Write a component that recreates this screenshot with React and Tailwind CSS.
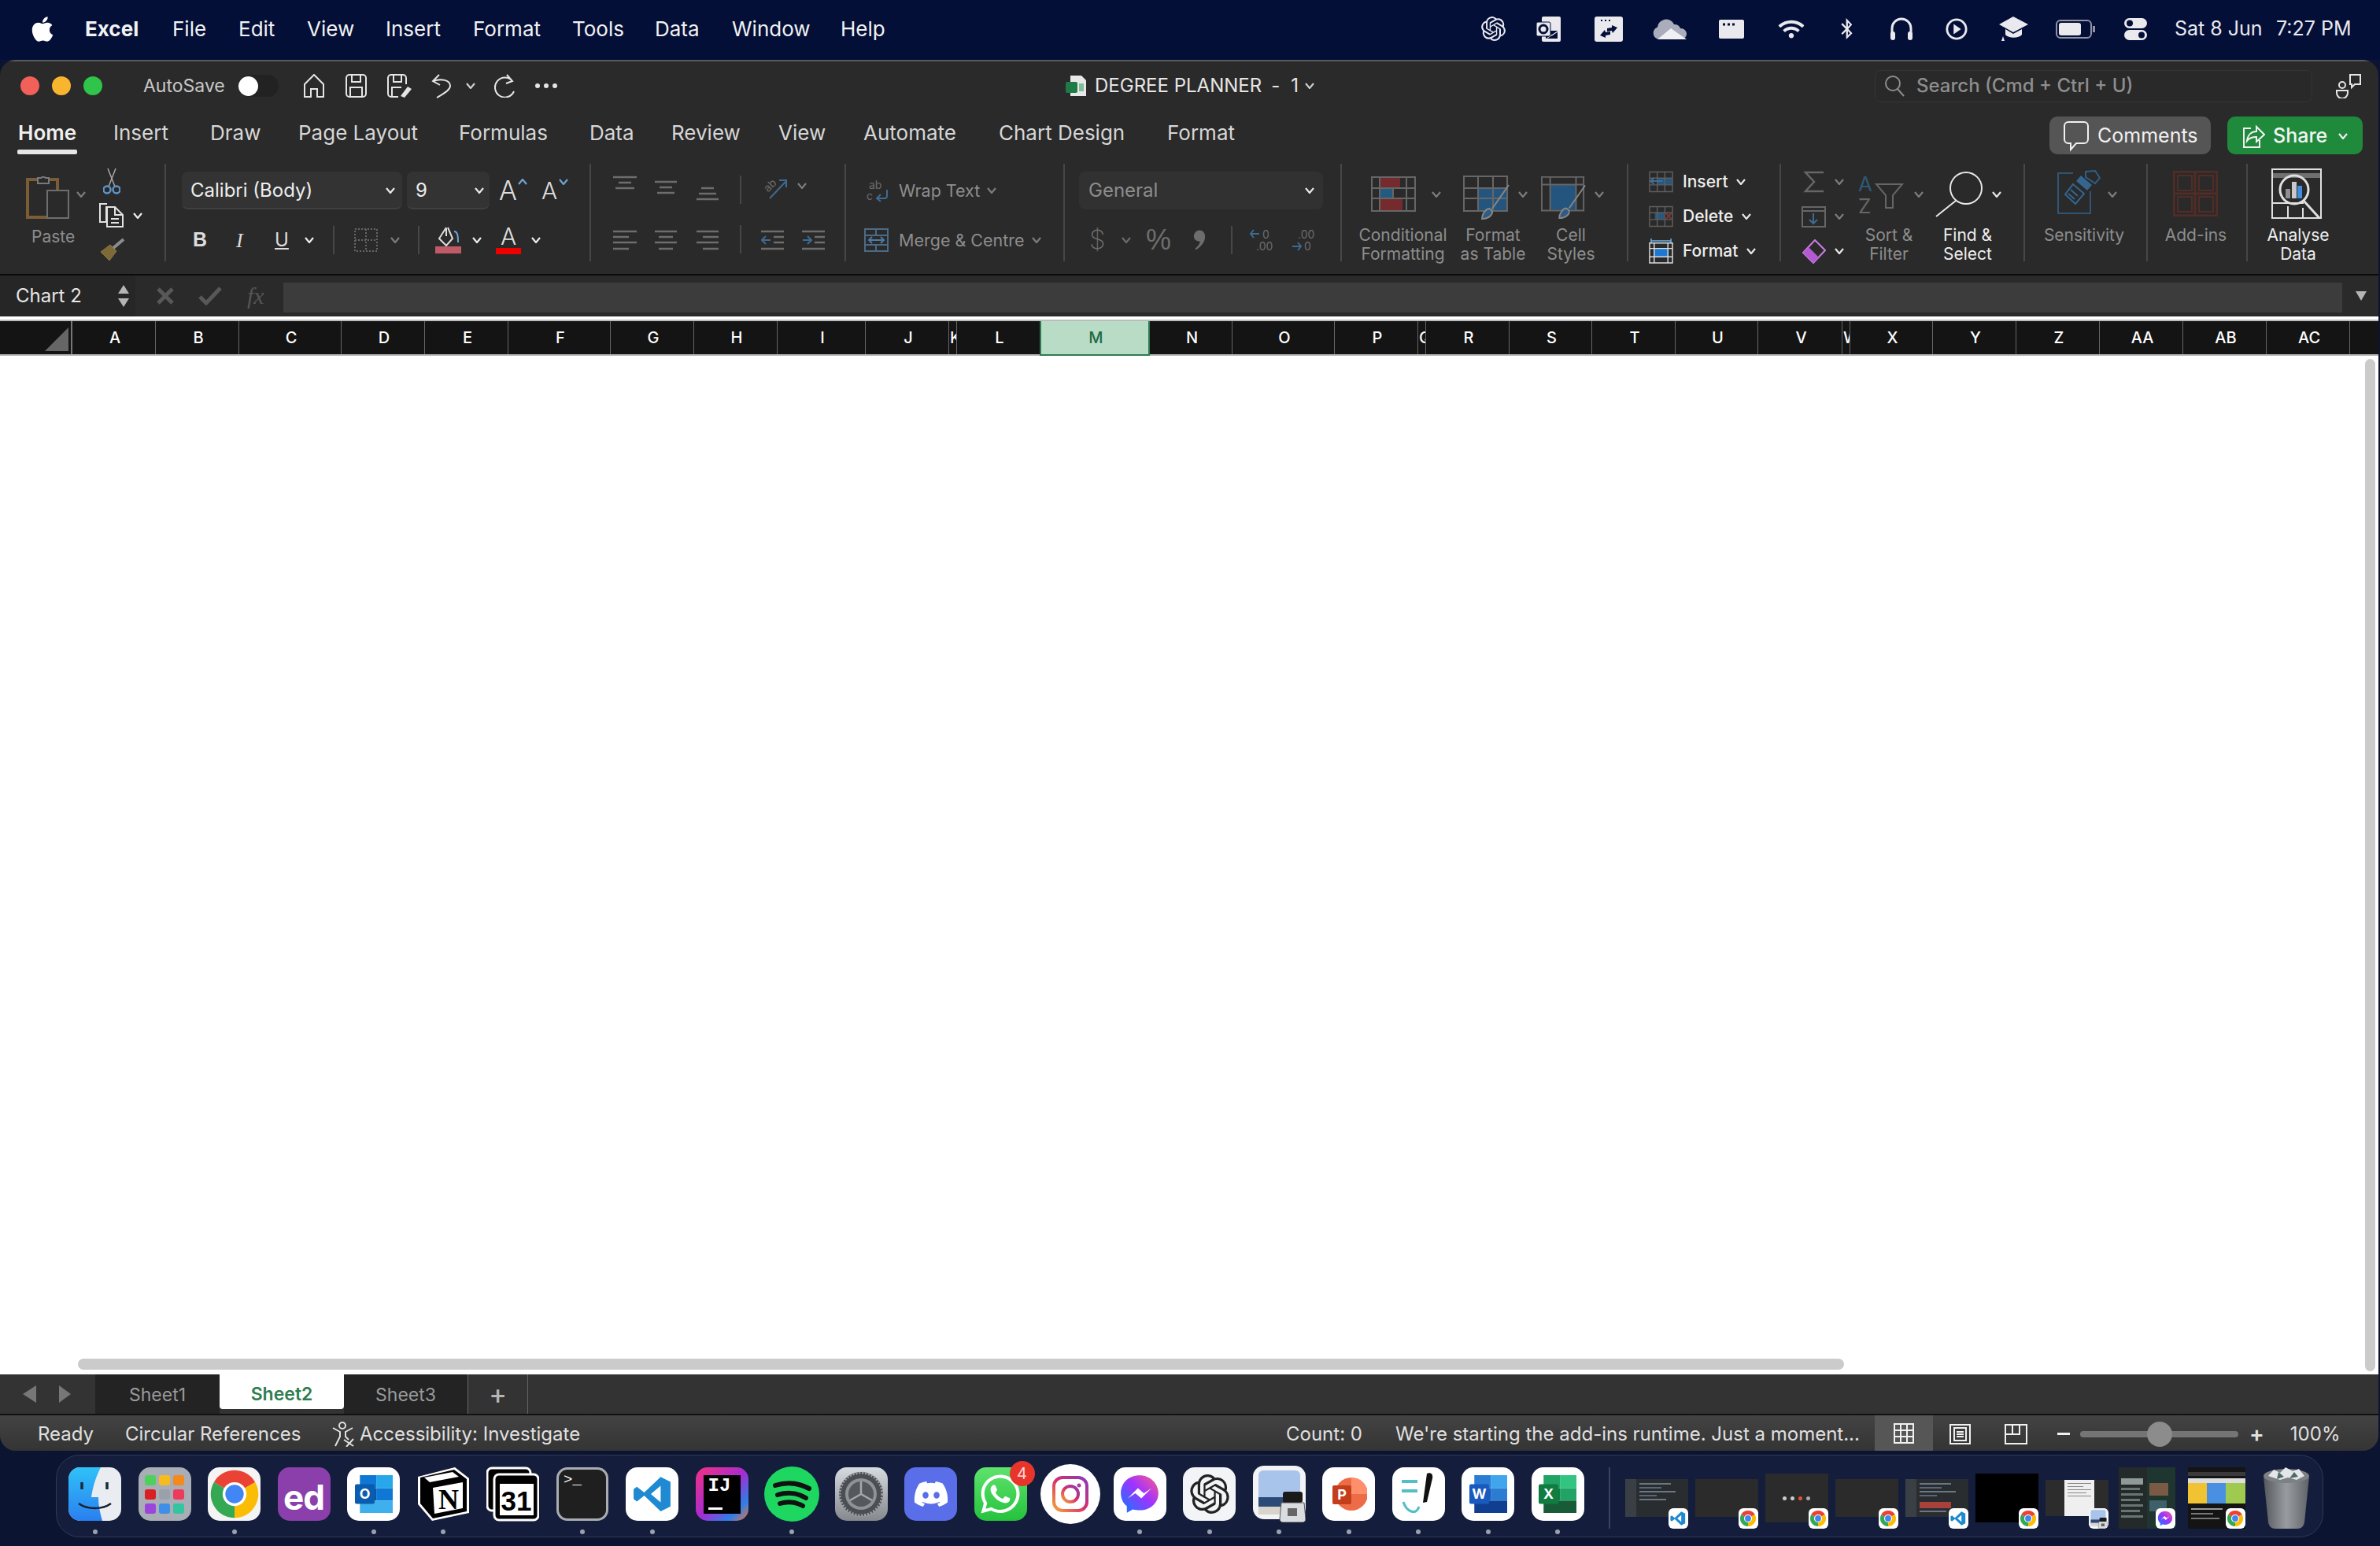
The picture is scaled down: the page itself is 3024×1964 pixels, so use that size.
import React from "react";
import { FaApple, FaDiscord, FaWhatsapp, FaBluetoothB, FaWifi } from "react-icons/fa";
import { SiOpenai } from "react-icons/si";

const Chev = ({ className = "text-[#e8e8e8]" }) => (
  <svg width="12" height="8" viewBox="0 0 12 8" fill="none" stroke="currentColor" strokeWidth="2.2" className={`shrink-0 ${className}`}>
    <path d="M1 1l5 6 5-6" />
  </svg>
);
const DimChev = () => <Chev className="text-[#7d7d7d]" />;
const Sep = () => <div className="mt-[12px] h-[124px] w-[2px] shrink-0 bg-[#474747]" />;
const MiniSep = () => <div className="h-[36px] w-[2px] shrink-0 bg-[#474747]" />;

const Chrome = ({ size = 67 }) => (
  <svg width={size} height={size} viewBox="0 0 48 48">
    <path d="M24 24L4.95 13A22 22 0 0 1 43.05 13Z" fill="#ea4335" />
    <path d="M24 24L43.05 13A22 22 0 0 1 24 46Z" fill="#fbbc04" />
    <path d="M24 24L24 46A22 22 0 0 1 4.95 13Z" fill="#34a853" />
    <circle cx="24" cy="24" r="11" fill="#fff" />
    <circle cx="24" cy="24" r="8.5" fill="#4285f4" />
  </svg>
);
const VsMark = ({ size = 50 }) => (
  <svg width={size} height={size} viewBox="0 0 48 48">
    <path d="M34 3L46 9V39L34 45L14 26L5 33L1 30V18L5 15L14 22ZM34 14L22 24L34 34Z" fill="#1f8ad2" fillRule="evenodd" />
  </svg>
);
const MessengerMark = ({ size = 52 }) => (
  <svg width={size} height={size} viewBox="0 0 48 48">
    <defs>
      <linearGradient id="msg" x1="0" y1="1" x2="1" y2="0">
        <stop offset="0" stopColor="#0a7cff" />
        <stop offset="0.55" stopColor="#a033ff" />
        <stop offset="1" stopColor="#ff5c87" />
      </linearGradient>
    </defs>
    <path d="M24 2C11 2 2 11 2 23c0 7 3 12 7 15v8l7-4c2.500 .7 5 1 8 1 13 0 22-9 22-20S37 2 24 2z" fill="url(#msg)" />
    <path d="M10 29l12-12 7 6 9-6-12 12-7-6z" fill="#fff" />
  </svg>
);
const PreviewMark = ({ width = 67, height = 72 }) => (
  <svg width={width} height={height} viewBox="0 0 67 72">
    <rect x="0" y="0" width="67" height="68" rx="14" fill="#f1f3f5" />
    <rect x="7" y="6" width="53" height="56" rx="6" fill="#a9c4ea" />
    <rect x="7" y="40" width="53" height="12" fill="#2b4a78" />
    <rect x="7" y="52" width="53" height="10" fill="#d8d4cc" />
    <rect x="38" y="33" width="25" height="14" rx="3" fill="#1a1a1a" />
    <path d="M36 47h29l2 21c0 2-2 4-4 4H38c-2 0-4-2-4-4z" fill="#d9dde0" stroke="#555" />
    <rect x="44" y="54" width="12" height="10" fill="#666" />
  </svg>
);

// office style tile, just the block grid plus a letter badge
const Office = ({ a, b, c, d, badge, letter }) => (
  <svg width="48" height="48" viewBox="0 0 46 46">
    <rect x="6" y="0" width="20" height="16" fill={a} />
    <rect x="26" y="0" width="20" height="16" fill={b} />
    <rect x="6" y="16" width="20" height="15" fill={c} />
    <rect x="26" y="16" width="20" height="15" fill={a} />
    <rect x="6" y="31" width="40" height="15" fill={d} />
    <rect x="0" y="11" width="24" height="24" rx="2" fill={badge} />
    <text x="12" y="29" textAnchor="middle" fontSize="17" fontWeight="700" fill="#fff" fontFamily="Inter">{letter}</text>
  </svg>
);

const Tile = ({ className = "bg-white", children }) => (
  <div className={`flex h-[68px] w-[67px] items-center justify-center rounded-[15px] ${className}`}>{children}</div>
);

const DockIcon = ({ dot, children }) => (
  <div className="flex w-[67px] shrink-0 flex-col items-center">
    <div className="relative flex h-[68px] w-[67px] items-center justify-center">{children}</div>
    <div className={`mt-[11px] h-[6px] w-[6px] rounded-full ${dot ? "bg-[#9aa0ad]" : "bg-transparent"}`} />
  </div>
);

const Thumb = ({ boxClass, badge, children, wide = "w-[80px]" }) => (
  <div className={`relative flex h-[78px] shrink-0 items-center ${wide}`}>
    <div className={`w-full overflow-hidden ${boxClass}`}>{children}</div>
    <div className="absolute bottom-0 right-0 flex h-[26px] w-[25px] items-center justify-center overflow-hidden rounded-[6px] bg-white">{badge}</div>
  </div>
);
const CodeLines = ({ red }) => (
  <div className="flex h-full w-full bg-[#2a2d30]">
    <div className="mr-[4px] h-full w-[14px] bg-[#3a3f45]" />
    <div className="flex flex-col gap-[3px] pt-[5px]">
      <div className="h-[2px] w-[40px] bg-[#6b7784]" />
      <div className="h-[2px] w-[28px] bg-[#596673]" />
      <div className="h-[2px] w-[46px] bg-[#6b7784]" />
      <div className="h-[2px] w-[22px] bg-[#596673]" />
      {red && <div className="mt-[4px] h-[8px] w-[40px] bg-[#a8403c]" />}
      <div className="h-[2px] w-[34px] bg-[#6b7784]" />
    </div>
  </div>
);

const gridLines = "M1 1h30v26H1zM1 9h30M1 18h30M11 1v26M21 1v26";
const brushPath = "M58 12L37 42M24 55c0-6 4-12 9-13 5 2 5 6 2 9-3 3-7 4-11 4z";

export default function App() {
  return (
    <div className="flex h-[1964px] w-[3024px] flex-col overflow-hidden bg-[#0b1431] font-['Inter',sans-serif]">
      {/* mac menu bar */}
      <div className="flex h-[76px] shrink-0 items-center bg-[#040f38] pb-[3px] text-[26px] text-[#f2f2f2]">
        <FaApple className="ml-[36px] mr-[36px] h-[36px] w-[36px] shrink-0 text-white" />
        <span className="w-[111px] font-bold">Excel</span>
        <span className="w-[84px]">File</span>
        <span className="w-[87px]">Edit</span>
        <span className="w-[100px]">View</span>
        <span className="w-[111px]">Insert</span>
        <span className="w-[126px]">Format</span>
        <span className="w-[105px]">Tools</span>
        <span className="w-[98px]">Data</span>
        <span className="w-[138px]">Window</span>
        <span>Help</span>
        <div className="ml-auto flex w-[1142px] items-center text-[#e9e9ee]">
          <SiOpenai className="h-[31px] w-[31px] shrink-0" />
          <svg width="31" height="32" viewBox="0 0 31 32" className="ml-[39px] shrink-0">
            <rect x="7" y="0" width="24" height="32" rx="2" fill="#e9e9ee" />
            <rect x="12" y="18" width="15" height="10" fill="#040f38" />
            <path d="M13 19l7 5 7-5M13 28l14-9" stroke="#e9e9ee" fill="none" />
            <rect x="0" y="7" width="18" height="18" rx="2" fill="#e9e9ee" stroke="#040f38" />
            <circle cx="9" cy="16" r="5" fill="none" stroke="#040f38" strokeWidth="3" />
          </svg>
          <svg width="36" height="32" viewBox="0 0 36 32" className="ml-[43px] shrink-0">
            <rect width="36" height="32" rx="3" fill="#e9e9ee" />
            <path d="M8 5h2M13 5h2M18 5h2" stroke="#040f38" strokeWidth="2" />
            <path d="M7 24l6-7 1 3 6-1v4l-6 1v3zM29 14l-6 7-1-3-6 1v-4l6-1V11z" fill="#040f38" />
          </svg>
          <svg width="43" height="26" viewBox="0 0 43 26" className="ml-[38px] shrink-0">
            <path d="M8 26a8 8 0 0 1-2-15.500A11 11 0 0 1 27 7a8 8 0 0 1 8 5c5 0 8 3.500 8 7s-3 7-7 7z" fill="#a9adbc" />
            <path d="M6 26l17-14 20 14z" fill="#eef0f4" />
          </svg>
          <svg width="32" height="24" viewBox="0 0 32 24" className="ml-[41px] shrink-0">
            <rect width="32" height="24" rx="2" fill="#e9e9ee" />
            <path d="M5 6h3M11 6h3M17 6h3" stroke="#040f38" strokeWidth="3" />
          </svg>
          <FaWifi className="ml-[43px] h-[26px] w-[34px] shrink-0" />
          <FaBluetoothB className="ml-[44px] h-[27px] w-[19px] shrink-0" />
          <svg width="30" height="30" viewBox="0 0 30 30" fill="none" stroke="#e9e9ee" className="ml-[45px] shrink-0">
            <path d="M3 21v-7a12 12 0 0 1 24 0v7" strokeWidth="3" />
            <rect x="1" y="18" width="6" height="11" rx="3" fill="#e9e9ee" strokeWidth="0" />
            <rect x="23" y="18" width="6" height="11" rx="3" fill="#e9e9ee" strokeWidth="0" />
          </svg>
          <svg width="30" height="28" viewBox="0 0 30 30" className="ml-[40px] shrink-0">
            <circle cx="15" cy="15" r="13" fill="none" stroke="#e9e9ee" strokeWidth="3" />
            <path d="M11 8l10 7-10 7z" fill="#e9e9ee" />
          </svg>
          <svg width="37" height="32" viewBox="0 0 37 32" className="ml-[39px] shrink-0">
            <path d="M18 0l19 10-19 10L0 10z" fill="#e9e9ee" />
            <path d="M8 16v7c4 5 17 5 21 0v-7l-11 6zM5 11v14l-2 6h4l-2-6z" fill="#e9e9ee" />
          </svg>
          <div className="ml-[35px] flex h-[24px] w-[46px] shrink-0 items-center rounded-[6px] border-2 border-[#8f93a3] p-[2px]">
            <div className="h-full w-[28px] rounded-[3px] bg-[#e9e9ee]" />
          </div>
          <div className="ml-[1px] h-[8px] w-[3px] shrink-0 bg-[#8f93a3]" />
          <svg width="29" height="28" viewBox="0 0 29 28" className="ml-[37px] shrink-0">
            <rect width="29" height="13" rx="6.500" fill="#e9e9ee" />
            <circle cx="7" cy="6.500" r="4" fill="#040f38" />
            <rect y="15" width="29" height="13" rx="6.500" fill="#e9e9ee" />
            <circle cx="22" cy="21.500" r="4" fill="#040f38" />
          </svg>
          <span className="ml-[35px] w-[129px] whitespace-nowrap text-[25px]">Sat 8 Jun</span>
          <span className="whitespace-nowrap text-[25px]">7:27 PM</span>
        </div>
      </div>

      {/* excel window */}
      <div className="mr-[2px] flex h-[1767px] shrink-0 flex-col overflow-hidden rounded-[20px] bg-[#2a2a2a] text-[#eeeeee]">
        {/* title bar */}
        <div className="flex h-[64px] shrink-0 items-center border-t-2 border-[#5a5a5a]">
          <div className="flex w-[1354px] shrink-0 items-center">
            <div className="ml-[26px] h-[24px] w-[24px] rounded-full bg-[#f2605a]" />
            <div className="ml-[16px] h-[24px] w-[24px] rounded-full bg-[#f9b52e]" />
            <div className="ml-[16px] h-[24px] w-[24px] rounded-full bg-[#2fc44a]" />
            <span className="ml-[52px] w-[121px] text-[23px] text-[#c8c8c8]">AutoSave</span>
            <div className="flex h-[28px] w-[51px] items-center rounded-full bg-[#222222]">
              <div className="h-[25px] w-[25px] rounded-full bg-white" />
            </div>
            <svg width="28" height="30" viewBox="0 0 28 30" fill="none" stroke="#e5e5e5" strokeWidth="2" className="ml-[31px]">
              <path d="M2 13L14 1l12 12v16h-8V19h-8v10H2z" />
            </svg>
            <svg width="27" height="30" viewBox="0 0 27 30" fill="none" stroke="#e5e5e5" strokeWidth="2" className="ml-[26px]">
              <path d="M5 1h17a4 4 0 0 1 4 4v20a4 4 0 0 1-4 4H5a4 4 0 0 1-4-4V5a4 4 0 0 1 4-4zM8 1v9h11V1M6 29V17h15v12" />
            </svg>
            <svg width="31" height="30" viewBox="0 0 31 30" fill="none" stroke="#e5e5e5" strokeWidth="2" className="ml-[26px]">
              <path d="M14 29H5a4 4 0 0 1-4-4V5a4 4 0 0 1 4-4h15a4 4 0 0 1 4 4v8M8 1v9h10V1M6 29V17h12" />
              <path d="M17 28l9-12 5 3-9 11z" fill="#e5e5e5" strokeWidth="0" />
            </svg>
            <svg width="27" height="31" viewBox="0 0 27 31" fill="none" stroke="#e5e5e5" strokeWidth="2" className="ml-[24px]">
              <path d="M11 1L3 9l9 5M3 9c11-4 22-1 22 6 0 6-10 11-17 15" />
            </svg>
            <Chev className="ml-[18px] text-[#d0d0d0]" />
            <svg width="28" height="30" viewBox="0 0 28 30" fill="none" stroke="#e5e5e5" strokeWidth="2" className="ml-[23px]">
              <path d="M24 9A12.500 12.500 0 1 0 26 22M17 1l7 8-8 3" />
            </svg>
            <div className="ml-[25px] flex gap-[5px]">
              <div className="h-[6px] w-[6px] rounded-full bg-[#e5e5e5]" />
              <div className="h-[6px] w-[6px] rounded-full bg-[#e5e5e5]" />
              <div className="h-[6px] w-[6px] rounded-full bg-[#e5e5e5]" />
            </div>
          </div>
          <div className="flex w-[1028px] shrink-0 items-center text-[24px] text-[#e6e6e6]">
            <svg width="27" height="28" viewBox="0 0 27 28">
              <path d="M6 1h14l6 6v20H6z" fill="#e8e8e8" />
              <rect x="0" y="9" width="15" height="14" rx="2" fill="#1e7b48" />
              <rect x="17" y="11" width="6" height="10" fill="#7fbf97" />
            </svg>
            <span className="ml-[10px] whitespace-nowrap">DEGREE PLANNER</span>
            <span className="ml-[12px]">-</span>
            <span className="ml-[14px]">1</span>
            <Chev className="ml-[8px] text-[#cccccc]" />
          </div>
          <div className="flex h-[41px] w-[556px] shrink-0 items-center rounded-[8px] border border-[#353535] bg-[#292929]">
            <svg width="27" height="28" viewBox="0 0 27 28" fill="none" stroke="#8c8c8c" strokeWidth="2" className="ml-[11px]">
              <circle cx="11" cy="11" r="9" />
              <path d="M17 18l8 9" />
            </svg>
            <span className="ml-[14px] whitespace-nowrap text-[24px] font-medium text-[#8e8e8e]">Search (Cmd + Ctrl + U)</span>
          </div>
          <svg width="32" height="31" viewBox="0 0 32 31" fill="none" stroke="#e5e5e5" strokeWidth="2" className="ml-[30px]">
            <circle cx="8" cy="14" r="4" />
            <path d="M1 21h14v3a7 7 0 0 1-14 0zM18 1h13v12h-7l-4 4v-4h-2z" />
          </svg>
        </div>

        {/* ribbon tabs */}
        <div className="flex h-[56px] shrink-0 text-[26px] text-[#d6d6d6]">
          <div className="flex h-full items-center pt-[1px]">
            <div className="relative ml-[23px] flex h-full w-[121px] items-center font-semibold text-[#f0f0f0]">
              Home
              <div className="absolute bottom-0 left-[-1px] h-[6px] w-[76px] rounded-[2px] bg-[#e6e6e6]" />
            </div>
            <span className="w-[123px]">Insert</span>
            <span className="w-[112px]">Draw</span>
            <span className="w-[204px]">Page Layout</span>
            <span className="w-[166px]">Formulas</span>
            <span className="w-[104px]">Data</span>
            <span className="w-[136px]">Review</span>
            <span className="w-[108px]">View</span>
            <span className="w-[172px]">Automate</span>
            <span className="w-[214px]">Chart Design</span>
            <span>Format</span>
          </div>
          <div className="ml-auto flex h-[48px] w-[205px] items-center self-end rounded-[10px] bg-[#555555] pt-[2px]">
            <svg width="34" height="40" viewBox="0 0 34 40" fill="none" stroke="#f0f0f0" strokeWidth="2" className="ml-[17px]">
              <path d="M7 2h20a5 5 0 0 1 5 5v17a5 5 0 0 1-5 5H17l-7 8v-8H7a5 5 0 0 1-5-5V7a5 5 0 0 1 5-5z" />
            </svg>
            <span className="ml-[10px] whitespace-nowrap text-[25px] text-[#f0f0f0]">Comments</span>
          </div>
          <div className="ml-[21px] mr-[20px] flex h-[48px] w-[172px] items-center self-end rounded-[10px] bg-[#1f8a3b] pt-[2px]">
            <svg width="30" height="30" viewBox="0 0 30 30" fill="none" stroke="#f2f2f2" strokeWidth="2" className="ml-[18px]">
              <path d="M12 5H3v24h20v-9M7 21c1-8 6-12 12-12V3l10 10-10 9v-6c-5 0-9 1-12 5z" />
            </svg>
            <span className="ml-[10px] text-[25px] font-medium text-[#f4f4f4]">Share</span>
            <Chev className="ml-[14px] text-[#f0f0f0]" />
          </div>
        </div>

        {/* ribbon */}
        <div className="flex h-[152px] shrink-0 text-[22px]">
          {/* clipboard */}
          <div className="flex w-[209px] shrink-0">
            <div className="ml-[33px] flex w-[70px] flex-col">
              <div className="mt-[22px] flex h-[69px] items-start">
                <svg width="55" height="60" viewBox="0 0 55 60" fill="none" className="shrink-0">
                  <path d="M2 10h38v48H2z" stroke="#7b5d35" strokeWidth="4" />
                  <path d="M15 8h4a4 4 0 0 1 6 0h4v7H15z" stroke="#7a7a7a" strokeWidth="2" fill="#2a2a2a" />
                  <rect x="27" y="24" width="27" height="35" fill="#2a2a2a" stroke="#6e6e6e" strokeWidth="2" />
                </svg>
                <div className="ml-[9px] mt-[25px]"><DimChev /></div>
              </div>
              <span className="mt-[-2px] ml-[7px] text-[21px] text-[#8d8d8d]">Paste</span>
            </div>
            <div className="ml-[23px] flex flex-col">
              <svg width="22" height="34" viewBox="0 0 22 34" fill="none" className="ml-[5px] mt-[17px]">
                <path d="M16 1L7 24M6 1l9 23" stroke="#a8a8a8" strokeWidth="1.500" />
                <circle cx="5" cy="28" r="4.500" stroke="#5d95c9" strokeWidth="2.500" />
                <circle cx="17" cy="28" r="4.500" stroke="#5d95c9" strokeWidth="2.500" />
              </svg>
              <div className="mt-[11px] flex items-center">
                <svg width="32" height="31" viewBox="0 0 32 31" fill="none" stroke="#e2e2e2" strokeWidth="2">
                  <path d="M10 24H1V1h9M9 4V24M10 5h10l10 10v15H10zM20 5v10h10M15 20h10M15 25h10" />
                </svg>
                <Chev className="ml-[11px]" />
              </div>
              <svg width="33" height="30" viewBox="0 0 33 30" fill="none" className="mt-[13px]">
                <path d="M14 9L2 18l11 11 9-12z" fill="#7d6a37" stroke="#8a7a49" />
                <path d="M18 13L31 2" stroke="#8c8c8c" strokeWidth="4" />
              </svg>
            </div>
          </div>
          <Sep />

          {/* font */}
          <div className="mt-[22px] flex w-[538px] shrink-0 flex-col">
            <div className="flex h-[48px] items-center">
              <div className="ml-[20px] flex h-full w-[280px] items-center justify-between rounded-[8px] border-b-2 border-[#404040] bg-[#333333] pl-[11px] pr-[9px] pt-[2px] text-[24px]">
                Calibri (Body)
                <Chev />
              </div>
              <div className="ml-[6px] flex h-full w-[105px] items-center justify-between rounded-[8px] border-b-2 border-[#404040] bg-[#333333] pl-[11px] pr-[7px] pt-[2px] text-[24px]">
                9
                <Chev />
              </div>
              <div className="relative ml-[12px] w-[32px] text-[34px] font-light leading-none text-[#dddddd]">
                A
                <Chev className="absolute right-[-4px] top-[2px] rotate-180 text-[#6fa3d6]" />
              </div>
              <div className="relative ml-[22px] w-[28px] text-[30px] font-light leading-none text-[#dddddd]">
                A
                <Chev className="absolute right-[-6px] top-[0px] text-[#6fa3d6]" />
              </div>
            </div>
            <div className="mt-[19px] flex h-[40px] items-center">
              <span className="ml-[34px] w-[55px] font-['Liberation_Sans'] text-[25px] font-bold text-[#dddddd]">B</span>
              <span className="w-[49px] font-['Liberation_Serif'] text-[26px] italic text-[#dddddd]">I</span>
              <span className="w-[32px] text-[24px] leading-[28px] underline underline-offset-2 text-[#dddddd]">U</span>
              <Chev className="ml-[6px]" />
              <div className="ml-[24px]"><MiniSep /></div>
              <svg width="30" height="30" viewBox="0 0 30 30" fill="none" stroke="#666666" strokeWidth="2" strokeDasharray="2 2" className="ml-[25px]">
                <path d="M1 1h28v28H1zM15 1v28M1 15h28" />
              </svg>
              <div className="ml-[16px]"><DimChev /></div>
              <div className="ml-[23px]"><MiniSep /></div>
              <svg width="34" height="34" viewBox="0 0 34 34" fill="none" className="ml-[20px]">
                <path d="M14 1l-9 14 9 9 8-9-6-14M14 2v10" stroke="#dddddd" strokeWidth="2" />
                <path d="M24 6c4 0 5 4 5 14" stroke="#6fa3d6" strokeWidth="2" />
                <rect x="0" y="25" width="33" height="9" fill="#c05a66" />
              </svg>
              <Chev className="ml-[13px]" />
              <div className="ml-[18px] flex w-[32px] flex-col items-center text-[30px] font-light leading-[26px] text-[#dddddd]">
                A
                <div className="mt-[2px] h-[8px] w-[32px] bg-[#ee0000]" />
              </div>
              <Chev className="ml-[13px]" />
            </div>
          </div>
          <Sep />

          {/* alignment */}
          <div className="mt-[27px] flex w-[322px] shrink-0 flex-col">
            <div className="flex h-[36px] items-start">
              <svg width="30" height="18" viewBox="0 0 30 18" stroke="#6d6d6d" strokeWidth="2.500" className="ml-[28px]"><path d="M0 2h30M7 9h16M3 16h24" /></svg>
              <svg width="28" height="18" viewBox="0 0 28 18" stroke="#6d6d6d" strokeWidth="2.500" className="ml-[23px] mt-[6px]"><path d="M0 2h28M6 9h16M3 16h22" /></svg>
              <svg width="28" height="18" viewBox="0 0 28 18" stroke="#6d6d6d" strokeWidth="2.500" className="ml-[25px] mt-[14px]"><path d="M6 2h16M3 9h22M0 16h28" /></svg>
              <div className="ml-[27px]"><MiniSep /></div>
              <svg width="35" height="30" viewBox="0 0 35 30" fill="none" className="ml-[24px] overflow-visible">
                <text x="5" y="18" fontSize="14" fill="#6d6d6d" transform="rotate(-45 12 14)" fontFamily="Inter">ab</text>
                <path d="M12 29L32 8M24 6h9v9" stroke="#3f6a92" strokeWidth="2" />
              </svg>
              <div className="ml-[12px] mt-[9px]"><DimChev /></div>
            </div>
            <div className="mt-[33px] flex h-[36px] items-start">
              <svg width="30" height="26" viewBox="0 0 30 26" stroke="#6d6d6d" strokeWidth="2.500" className="ml-[28px]"><path d="M0 2h30M0 9h20M0 16h30M0 24h20" /></svg>
              <svg width="28" height="26" viewBox="0 0 28 26" stroke="#6d6d6d" strokeWidth="2.500" className="ml-[23px]"><path d="M0 2h28M5 9h18M0 16h28M5 24h18" /></svg>
              <svg width="28" height="26" viewBox="0 0 28 26" stroke="#6d6d6d" strokeWidth="2.500" className="ml-[25px]"><path d="M0 2h28M8 9h20M0 16h28M8 24h20" /></svg>
              <div className="ml-[27px] -mt-[6px]"><MiniSep /></div>
              <svg width="29" height="26" viewBox="0 0 29 26" fill="none" className="ml-[25px]">
                <path d="M0 2h29M16 9h13M16 16h13M0 24h29" stroke="#6d6d6d" strokeWidth="2.500" />
                <path d="M12 13H1M6 8l-5 5 5 5" stroke="#3f6a92" strokeWidth="2" />
              </svg>
              <svg width="29" height="26" viewBox="0 0 29 26" fill="none" className="ml-[23px]">
                <path d="M0 2h29M16 9h13M16 16h13M0 24h29" stroke="#6d6d6d" strokeWidth="2.500" />
                <path d="M1 13h11M7 8l5 5-5 5" stroke="#3f6a92" strokeWidth="2" />
              </svg>
            </div>
          </div>
          <Sep />

          {/* wrap and merge */}
          <div className="mt-[30px] flex w-[276px] shrink-0 flex-col text-[21.500px] text-[#8d8d8d]">
            <div className="flex h-[32px] items-center">
              <svg width="30" height="32" viewBox="0 0 30 32" fill="none" className="ml-[26px] overflow-visible">
                <text x="3" y="14" fontSize="14" fill="#6d6d6d" fontFamily="Inter">ab</text>
                <text x="0" y="28" fontSize="14" fill="#6d6d6d" fontFamily="Inter">c</text>
                <path d="M26 15v8a3 3 0 0 1-3 3h-9M18 21l-5 5 5 4" stroke="#3f6a92" strokeWidth="2" />
              </svg>
              <span className="ml-[11px] w-[112px] whitespace-nowrap">Wrap Text</span>
              <DimChev />
            </div>
            <div className="mt-[31px] flex h-[32px] items-center">
              <svg width="31" height="30" viewBox="0 0 31 30" fill="none" className="ml-[23px]">
                <path d="M1 1h29v28H1zM1 9h29M1 21h29M15 1v8M15 21v8" stroke="#4d6a85" strokeWidth="2" />
                <path d="M6 15h19M10 11l-4 4 4 4M21 11l4 4-4 4" stroke="#4d7aa5" strokeWidth="2" />
              </svg>
              <span className="ml-[13px] w-[169px] whitespace-nowrap">Merge &amp; Centre</span>
              <DimChev />
            </div>
          </div>
          <Sep />

          {/* number */}
          <div className="mt-[22px] flex w-[350px] shrink-0 flex-col">
            <div className="ml-[18px] flex h-[48px] w-[310px] items-center justify-between rounded-[8px] bg-[#313131] pl-[12px] pr-[11px] text-[24px] text-[#8d8d8d]">
              General
              <Chev />
            </div>
            <div className="mt-[19px] flex h-[40px] items-center text-[#6d6d6d]">
              <span className="ml-[31px] w-[18px] text-[33px] font-extralight">$</span>
              <Chev className="ml-[23px]" />
              <span className="ml-[19px] w-[31px] whitespace-nowrap font-['Liberation_Sans'] text-[36px] leading-none">%</span>
              <svg width="16" height="28" viewBox="0 0 18 30" fill="#6d6d6d" className="ml-[29px]">
                <path d="M9 1c5 0 8 4 8 9 0 8-6 15-13 19l-1-2c4-3 6-6 7-10-5 0-9-3-9-7 0-5 4-9 8-9z" />
              </svg>
              <div className="ml-[32px]"><MiniSep /></div>
              <svg width="32" height="34" viewBox="0 0 32 34" className="ml-[22px] overflow-visible" fill="none">
                <path d="M12 9H1M5 4L1 9l4 5" stroke="#3f6a92" strokeWidth="2" />
                <text x="16" y="15" fontSize="14" fill="#6d6d6d" fontFamily="Inter">0</text>
                <text x="8" y="30" fontSize="14" fill="#6d6d6d" fontFamily="Inter">.00</text>
              </svg>
              <svg width="32" height="34" viewBox="0 0 32 34" className="ml-[21px] overflow-visible" fill="none">
                <text x="8" y="15" fontSize="14" fill="#6d6d6d" fontFamily="Inter">.00</text>
                <path d="M1 25h11M8 20l4 5-4 5" stroke="#3f6a92" strokeWidth="2" />
                <text x="16" y="30" fontSize="14" fill="#6d6d6d" fontFamily="Inter">0</text>
              </svg>
            </div>
          </div>
          <Sep />

          {/* styles */}
          <div className="flex w-[362px] shrink-0 text-center text-[21px] leading-[24px] text-[#8d8d8d]">
            <div className="ml-[20px] flex w-[115px] shrink-0 flex-col items-center">
              <div className="flex h-[91px] w-full items-start">
                <svg width="57" height="45" viewBox="0 0 57 45" fill="none" className="ml-[17px] mt-[28px]">
                  <rect x="11" y="1" width="26" height="14" fill="#752b2e" />
                  <rect x="11" y="15" width="17" height="13" fill="#235a80" />
                  <rect x="11" y="28" width="29" height="16" fill="#752b2e" />
                  <path d="M1 1h55v43H1zM1 15h55M1 28h55M11 1v43M28 15v13M45 1v43" stroke="#666666" strokeWidth="2" />
                </svg>
                <div className="ml-[20px] mt-[47px]"><DimChev /></div>
              </div>
              Conditional<br />Formatting
            </div>
            <div className="flex w-[114px] shrink-0 flex-col items-center">
              <div className="flex h-[91px] w-full items-start">
                <svg width="60" height="56" viewBox="0 0 60 56" fill="none" className="ml-[19px] mt-[27px]">
                  <rect x="19" y="16" width="36" height="29" fill="#24557e" />
                  <path d="M1 1h55v44H1zM1 16h55M1 29h55M19 1v44M38 1v44" stroke="#666666" strokeWidth="2" />
                  <path d={brushPath} stroke="#868686" strokeWidth="2" fill="#2f5b85" />
                </svg>
                <div className="ml-[10px] mt-[47px]"><DimChev /></div>
              </div>
              Format<br />as Table
            </div>
            <div className="flex w-[84px] shrink-0 flex-col items-center">
              <div className="flex h-[91px] w-full items-start">
                <svg width="60" height="56" viewBox="0 0 60 56" fill="none" className="ml-[4px] mt-[27px]">
                  <rect x="12" y="11" width="34" height="33" fill="#24557e" />
                  <path d="M1 1h55v44H1zM1 11h55M12 1v44M46 1v44" stroke="#666666" strokeWidth="2" />
                  <path d={brushPath} stroke="#868686" strokeWidth="2" fill="#2f5b85" />
                </svg>
                <div className="ml-[10px] mt-[47px] shrink-0"><DimChev /></div>
              </div>
              Cell<br />Styles
            </div>
          </div>
          <Sep />

          {/* cells */}
          <div className="mt-[13px] flex w-[192px] shrink-0 flex-col text-[21px] font-medium text-[#eeeeee]">
            <div className="flex h-[44px] items-center">
              <svg width="31" height="28" viewBox="0 0 32 28" fill="none" className="ml-[26px]">
                <rect x="11" y="9" width="20" height="9" fill="#26597f" />
                <path d={gridLines} stroke="#5f5f5f" strokeWidth="1.500" />
                <path d="M18 13H2M7 9l-5 4 5 4" stroke="#3d6f99" strokeWidth="2" />
              </svg>
              <span className="ml-[12px] w-[68px]">Insert</span>
              <Chev />
            </div>
            <div className="flex h-[44px] items-center">
              <svg width="31" height="28" viewBox="0 0 32 28" fill="none" className="ml-[26px]">
                <rect x="8" y="9" width="12" height="9" fill="#26597f" />
                <path d={gridLines} stroke="#5f5f5f" strokeWidth="1.500" />
                <path d="M22 9l8 9M30 9l-8 9" stroke="#7d3a38" strokeWidth="2" />
              </svg>
              <span className="ml-[12px] w-[75px]">Delete</span>
              <Chev />
            </div>
            <div className="flex h-[44px] items-center">
              <svg width="31" height="32" viewBox="0 0 32 33" fill="none" className="ml-[26px]">
                <path d="M3 3h26M3 0v6M29 0v6" stroke="#6db5ee" strokeWidth="1.500" />
                <rect x="7" y="13" width="18" height="11" fill="#1d78d2" />
                <path d="M1 6h30v26H1zM1 13h30M1 24h30M7 6v26M25 6v26" stroke="#dddddd" strokeWidth="1.500" />
              </svg>
              <span className="ml-[12px] w-[81px]">Format</span>
              <Chev />
            </div>
          </div>
          <Sep />

          {/* editing */}
          <div className="flex w-[308px] shrink-0 text-center text-[21px] leading-[24px]">
            <div className="mt-[13px] flex w-[87px] shrink-0 flex-col">
              <div className="flex h-[44px] items-center">
                <svg width="31" height="28" viewBox="0 0 31 28" fill="none" stroke="#666666" strokeWidth="2.500" className="ml-[26px]">
                  <path d="M28 2H5l11 12L5 26h23" />
                </svg>
                <div className="ml-[11px]"><DimChev /></div>
              </div>
              <div className="flex h-[44px] items-center">
                <svg width="31" height="27" viewBox="0 0 31 27" fill="none" className="ml-[26px]">
                  <path d="M1 1h29v25H1zM1 6h29" stroke="#666666" strokeWidth="2" />
                  <path d="M15 9v12M10 17l5 5 5-5" stroke="#3f6a92" strokeWidth="2" />
                </svg>
                <div className="ml-[11px]"><DimChev /></div>
              </div>
              <div className="flex h-[44px] items-center">
                <svg width="31" height="31" viewBox="0 0 31 31" fill="none" className="ml-[26px]">
                  <path d="M17 1l13 13-15 16L2 17z" stroke="#c77fe0" strokeWidth="2" />
                  <path d="M2 17l7-7 13 13-7 7z" fill="#b35ad2" />
                </svg>
                <div className="ml-[11px]"><Chev /></div>
              </div>
            </div>
            <div className="flex w-[100px] shrink-0 flex-col items-center text-[#8d8d8d]">
              <div className="flex h-[91px] w-full items-start">
                <svg width="60" height="54" viewBox="0 0 60 54" fill="none" className="ml-[11px] mt-[23px] overflow-visible">
                  <text x="0" y="24" fontSize="26" fill="#2f5877" fontFamily="Inter">A</text>
                  <text x="0" y="52" fontSize="26" fill="#666666" fontFamily="Inter">Z</text>
                  <path d="M23 15h33L44 29v16H35V29z" stroke="#666666" strokeWidth="2" />
                </svg>
                <div className="ml-[11px] mt-[47px]"><DimChev /></div>
              </div>
              Sort &amp;<br />Filter
            </div>
            <div className="flex w-[100px] shrink-0 flex-col items-center text-[#eeeeee]">
              <div className="flex h-[91px] w-full items-start">
                <svg width="60" height="58" viewBox="0 0 60 58" fill="none" stroke="#e8e8e8" strokeWidth="2" className="ml-[9px] mt-[22px]">
                  <ellipse cx="39" cy="21" rx="20" ry="20" />
                  <path d="M26 37L1 57" />
                </svg>
                <div className="ml-[12px] mt-[47px]"><Chev /></div>
              </div>
              Find &amp;<br />Select
            </div>
          </div>
          <Sep />

          {/* sensitivity */}
          <div className="flex w-[154px] shrink-0 flex-col text-[21px] leading-[24px] text-[#8d8d8d]">
            <div className="flex h-[91px] items-start">
              <svg width="55" height="58" viewBox="0 0 55 58" fill="none" className="ml-[41px] mt-[19px]">
                <path d="M20 5H1v51h41V28" stroke="#2f5573" strokeWidth="2" />
                <path d="M36 3l12-1 6 9-6 7-12-8z" stroke="#2f5f85" strokeWidth="2" fill="#2a2a2a" />
                <path d="M30 8l14 12-6 7-14-12z" fill="#34668f" />
                <path d="M20 19l14 12-11 13-13-12z" stroke="#34668f" strokeWidth="2" />
                <path d="M17 26l9 8M14 31l8 7" stroke="#34668f" strokeWidth="2" />
              </svg>
              <div className="ml-[9px] mt-[47px]"><DimChev /></div>
            </div>
            <span className="w-[150px] text-center">Sensitivity</span>
          </div>
          <Sep />

          {/* add-ins */}
          <div className="flex w-[125px] shrink-0 flex-col text-[21px] leading-[24px] text-[#8d8d8d]">
            <div className="h-[91px] pl-[32px] pt-[21px]">
              <svg width="57" height="58" viewBox="0 0 57 58" fill="none" stroke="#522c26" strokeWidth="2">
                <path d="M1 1h55v56H1zM28 1v56M1 29h55" strokeWidth="3" />
                <path d="M6 6h18v19H6zM33 6h18v19H33zM6 33h18v19H6zM33 33h18v19H33z" />
              </svg>
            </div>
            <span className="w-[122px] text-center">Add-ins</span>
          </div>
          <Sep />

          {/* analyse */}
          <div className="flex w-[128px] shrink-0 flex-col text-[21px] leading-[24px] text-[#eeeeee]">
            <div className="h-[91px] pl-[30px] pt-[18px]">
              <svg width="64" height="64" viewBox="0 0 64 64" fill="none" stroke="#e0e0e0" strokeWidth="2">
                <path d="M1 1h62v62H1z" />
                <rect x="2" y="6" width="60" height="6" fill="#707070" strokeWidth="0" />
                <path d="M1 44h40M21 48v15M40 50v13" />
                <circle cx="29" cy="27" r="18" strokeWidth="3" />
                <path d="M41 41l20 22" strokeWidth="3" />
                <rect x="18" y="26" width="6" height="12" fill="#8f8f8f" strokeWidth="0" />
                <rect x="26" y="17" width="6" height="21" fill="#c9c9c9" strokeWidth="0" />
                <rect x="33" y="22" width="6" height="16" fill="#3f8fe0" strokeWidth="0" />
              </svg>
            </div>
            <span className="text-center">Analyse<br />Data</span>
          </div>
        </div>

        {/* formula bar */}
        <div className="flex h-[54px] shrink-0 items-center border-t-2 border-[#0a0a0a]">
          <div className="flex h-full w-[172px] shrink-0 items-center bg-[#262626] pl-[20px] text-[24px] text-[#e6e6e6]">
            <span className="w-[130px]">Chart 2</span>
            <div className="flex flex-col gap-[6px]">
              <div className="h-0 w-0 border-x-[7px] border-b-[11px] border-x-transparent border-b-[#b5b5b5]" />
              <div className="h-0 w-0 border-x-[7px] border-t-[11px] border-x-transparent border-t-[#b5b5b5]" />
            </div>
          </div>
          <div className="flex w-[188px] shrink-0 items-center text-[#555555]">
            <svg width="22" height="22" viewBox="0 0 22 22" stroke="#585858" strokeWidth="5" className="ml-[27px]"><path d="M2 2l18 18M20 2L2 20" /></svg>
            <svg width="30" height="24" viewBox="0 0 30 24" fill="none" stroke="#585858" strokeWidth="5" className="ml-[31px]"><path d="M2 13l8 8L28 2" /></svg>
            <span className="ml-[32px] font-['Liberation_Serif'] text-[30px] italic leading-none">fx</span>
          </div>
          <div className="mt-[4px] h-[38px] w-[2616px] shrink-0 bg-[#3c3c3c]" />
          <div className="ml-[17px] h-0 w-0 border-x-[7px] border-t-[12px] border-x-transparent border-t-[#b5b5b5]" />
        </div>
        <div className="h-[6px] shrink-0 border-b-[2px] border-[#bcbcbc] bg-white" />

        {/* column headers */}
        <div className="flex h-[44px] shrink-0 border-b-2 border-[#b5b5b5] bg-[#141414] text-center text-[20px] font-medium leading-[42px] text-white [&>div]:pl-[3px]">
          <div className="flex w-[92px] shrink-0 items-end justify-end border-r-2 border-[#777777] pb-[4px] pr-[3px]">
            <div className="h-0 w-0 border-b-[30px] border-l-[30px] border-b-[#666666] border-l-transparent" />
          </div>
          <div className="w-[106px] shrink-0 border-r border-[#666666]">A</div>
          <div className="w-[106px] shrink-0 border-r border-[#666666]">B</div>
          <div className="w-[130px] shrink-0 border-r border-[#666666]">C</div>
          <div className="w-[106px] shrink-0 border-r border-[#666666]">D</div>
          <div className="w-[106px] shrink-0 border-r border-[#666666]">E</div>
          <div className="w-[130px] shrink-0 border-r border-[#666666]">F</div>
          <div className="w-[106px] shrink-0 border-r border-[#666666]">G</div>
          <div className="w-[106px] shrink-0 border-r border-[#666666]">H</div>
          <div className="w-[112px] shrink-0 border-r border-[#666666]">I</div>
          <div className="w-[106px] shrink-0 border-r border-[#666666]">J</div>
          {/* hidden-ish narrow columns: the letter is clipped in the app too */}
          <div className="w-[10px] shrink-0 overflow-hidden whitespace-nowrap border-r border-[#666666] !pl-[1px] text-left">K</div>
          <div className="w-[105px] shrink-0">L</div>
          <div className="h-[46px] w-[140px] shrink-0 border-x-2 border-b-4 border-[#2f7a50] bg-[#b9dcc6] text-[#1f6b45]">M</div>
          <div className="w-[105px] shrink-0 border-r border-[#666666]">N</div>
          <div className="w-[130px] shrink-0 border-r border-[#666666]">O</div>
          <div className="w-[106px] shrink-0 border-r border-[#666666]">P</div>
          <div className="w-[10px] shrink-0 overflow-hidden whitespace-nowrap border-r border-[#666666] !pl-[1px] text-left">Q</div>
          <div className="w-[106px] shrink-0 border-r border-[#666666]">R</div>
          <div className="w-[105px] shrink-0 border-r border-[#666666]">S</div>
          <div className="w-[106px] shrink-0 border-r border-[#666666]">T</div>
          <div className="w-[105px] shrink-0 border-r border-[#666666]">U</div>
          <div className="w-[107px] shrink-0 border-r border-[#666666]">V</div>
          <div className="w-[10px] shrink-0 overflow-hidden whitespace-nowrap border-r border-[#666666] !pl-[1px] text-left">W</div>
          <div className="w-[105px] shrink-0 border-r border-[#666666]">X</div>
          <div className="w-[106px] shrink-0 border-r border-[#666666]">Y</div>
          <div className="w-[106px] shrink-0 border-r border-[#666666]">Z</div>
          <div className="w-[106px] shrink-0 border-r border-[#666666]">AA</div>
          <div className="w-[106px] shrink-0 border-r border-[#666666]">AB</div>
          <div className="w-[106px] shrink-0 border-r border-[#666666]">AC</div>
        </div>

        {/* empty sheet with its overlay scrollbars */}
        <div className="relative h-[1294px] shrink-0 bg-white">
          <div className="absolute bottom-[6px] left-[99px] h-[14px] w-[2244px] rounded-full bg-[#cbcbcb]" />
          <div className="absolute bottom-[4px] right-[4px] top-[4px] w-[13px] rounded-full bg-[#cbcbcb]" />
        </div>

        {/* sheet tabs */}
        <div className="flex h-[52px] shrink-0 items-stretch border-b-2 border-[#111111] bg-[#333333] text-[23px] text-[#9a9a9a]">
          <div className="flex w-[121px] shrink-0 items-center">
            <div className="ml-[29px] h-0 w-0 border-y-[11px] border-r-[17px] border-y-transparent border-r-[#777777]" />
            <div className="ml-[29px] h-0 w-0 border-y-[11px] border-l-[15px] border-y-transparent border-l-[#777777]" />
          </div>
          <div className="flex w-[158px] shrink-0 items-center justify-center bg-[#232323] pt-[2px]">Sheet1</div>
          <div className="mb-[6px] flex w-[158px] shrink-0 items-center justify-center rounded-b-[4px] bg-white pt-[6px] font-semibold text-[#2e7d4f]">Sheet2</div>
          <div className="flex w-[158px] shrink-0 items-center justify-center border-r border-[#666666] bg-[#232323] pt-[2px]">Sheet3</div>
          <div className="flex w-[76px] shrink-0 items-center justify-center border-r border-[#666666] text-[34px] font-medium leading-none text-[#b5b5b5]">+</div>
        </div>

        {/* status bar */}
        <div className="flex h-[45px] shrink-0 items-center bg-[linear-gradient(#434343,#343434)] pt-[2px] text-[24px] text-[#e0e0e0]">
          <span className="ml-[48px] w-[111px]">Ready</span>
          <span className="w-[262px] whitespace-nowrap">Circular References</span>
          <svg width="30" height="32" viewBox="0 0 30 32" fill="none" stroke="#e0e0e0" strokeWidth="2">
            <circle cx="14" cy="5" r="4" />
            <path d="M2 8l9 5v6l-6 12M27 8l-9 5v6l4 4M16 23l12 8M28 22l-9 10" />
          </svg>
          <span className="ml-[6px] w-[1177px] whitespace-nowrap">Accessibility: Investigate</span>
          <span className="w-[139px] whitespace-nowrap">Count: 0</span>
          <span className="w-[609px] whitespace-nowrap">We're starting the add-ins runtime. Just a moment...</span>
          <div className="-mt-[2px] flex h-[45px] w-[74px] items-center justify-center bg-[#565656]">
            <svg width="26" height="26" viewBox="0 0 26 26" fill="none" stroke="#f0f0f0" strokeWidth="2"><path d="M1 1h24v24H1zM9 1v24M17 1v24M1 9h24M1 17h24" /></svg>
          </div>
          <svg width="27" height="26" viewBox="0 0 27 26" fill="none" stroke="#f0f0f0" strokeWidth="2" className="ml-[21px]"><path d="M1 1h25v24H1zM6 5h15v16H6zM9 10h9M9 13h9M9 16h9" /></svg>
          <svg width="29" height="26" viewBox="0 0 29 26" fill="none" stroke="#f0f0f0" strokeWidth="2" className="ml-[43px]"><path d="M1 1h27v24H1zM10 1v12h9V1M1 13h9" /></svg>
          <div className="ml-[38px] h-[3px] w-[16px] bg-[#f0f0f0]" />
          <div className="relative ml-[13px] h-[8px] w-[201px] rounded-full bg-[#757575]">
            <div className="absolute left-[85px] top-[-12px] h-[32px] w-[32px] rounded-full bg-[#8c8c8c]" />
          </div>
          <span className="ml-[14px] text-[28px] font-semibold leading-none">+</span>
          <span className="ml-[33px] whitespace-nowrap">100%</span>
        </div>
      </div>

      {/* dock */}
      <div className="ml-[71px] mt-[5px] flex h-[105px] w-[2881px] shrink-0 items-start gap-[21.500px] rounded-[30px] border border-[#2f3a55] bg-[#141d3b] pl-[15px] pt-[15px]">
        <DockIcon dot>
          <svg width="67" height="68" viewBox="0 0 67 68">
            <defs>
              <linearGradient id="finder" x1="0" y1="0" x2="0" y2="1">
                <stop offset="0" stopColor="#2fc2f8" />
                <stop offset="1" stopColor="#2a7ff0" />
              </linearGradient>
            </defs>
            <rect width="67" height="68" rx="15" fill="#e9edf2" />
            <path d="M15 0h26c-6 12-10 24-12 38h9c0 10 2 20 5 30H15A15 15 0 0 1 0 53V15A15 15 0 0 1 15 0z" fill="url(#finder)" />
            <path d="M17 19v9M49 19v9" stroke="#1b2a3a" strokeWidth="3.500" />
            <path d="M13 46c11 8 30 8 41 0" stroke="#16202c" strokeWidth="2.500" fill="none" />
          </svg>
        </DockIcon>
        <DockIcon>
          <Tile className="bg-[#a9adb5]">
            <div className="grid grid-cols-3 gap-x-[4px] gap-y-[5px]">
              <div className="h-[13px] w-[14px] rounded-[3px] bg-[#4fd05c]" />
              <div className="h-[13px] w-[14px] rounded-[3px] bg-[#f7bb1d]" />
              <div className="h-[13px] w-[14px] rounded-[3px] bg-[#f48a1c]" />
              <div className="h-[13px] w-[14px] rounded-[3px] bg-[#d91f22]" />
              <div className="h-[13px] w-[14px] rounded-[3px] bg-[#9aa1ab]" />
              <div className="h-[13px] w-[14px] rounded-[3px] bg-[#ee3b5b]" />
              <div className="h-[13px] w-[14px] rounded-[3px] bg-[#9a45dc]" />
              <div className="h-[13px] w-[14px] rounded-[3px] bg-[#3f8fe8]" />
              <div className="h-[13px] w-[14px] rounded-[3px] bg-[#35c4a0]" />
            </div>
          </Tile>
        </DockIcon>
        <DockIcon dot><Tile className="bg-[#f4f4f4]"><Chrome size={66} /></Tile></DockIcon>
        <DockIcon>
          <Tile className="bg-[#8a3fab] pt-[8px]"><span className="text-[44px] font-bold leading-none tracking-[-1px] text-white">ed</span></Tile>
        </DockIcon>
        <DockIcon dot>
          <Tile>
            <Office a="#0f78d4" b="#28a8ea" c="#0358a7" d="#3fb0ee" badge="#0a5cae" letter="O" />
          </Tile>
        </DockIcon>
        <DockIcon dot>
          <svg width="67" height="70" viewBox="0 0 67 70">
            <path d="M1 13L48 1l18 14v44L19 69 1 48z" fill="#fff" />
            <path d="M4 14L47 4l16 12v41L20 66 4 47z" fill="#000" />
            <path d="M9 14L45 7l8 6-37 7z" fill="#fff" />
            <path d="M20 27l38-7v33l-36 7z" fill="#fff" />
            <text x="40" y="54" textAnchor="middle" fontSize="36" fontWeight="700" fontFamily="Liberation Serif">N</text>
          </svg>
        </DockIcon>
        <DockIcon>
          <svg width="67" height="70" viewBox="0 0 67 70">
            <rect x="1" y="2" width="55" height="54" rx="6" fill="#000" stroke="#fff" strokeWidth="3" />
            <rect x="10" y="10" width="56" height="58" rx="6" fill="#000" stroke="#fff" strokeWidth="3" />
            <rect x="17" y="22" width="43" height="40" fill="#fff" />
            <text x="38" y="56" textAnchor="middle" fontSize="35" fontWeight="700" fontFamily="Liberation Sans">31</text>
          </svg>
        </DockIcon>
        <DockIcon dot>
          <div className="flex h-[68px] w-[66px] flex-col rounded-[14px] border-[3px] border-[#a9adb2] bg-[#1f1f1f] pl-[6px] pt-[4px] font-['Liberation_Mono'] text-[19px] leading-none text-white">
            &gt;_
          </div>
        </DockIcon>
        <DockIcon dot><Tile><VsMark /></Tile></DockIcon>
        <DockIcon>
          <Tile className="bg-[linear-gradient(135deg,#f5317f,#a82bd1_50%,#2d7fe8_80%,#f2703d)]">
            <div className="flex h-[49px] w-[47px] flex-col justify-between bg-black px-[6px] pb-[5px] pt-[2px] font-['Liberation_Mono'] text-[24px] font-bold leading-none text-white">
              IJ
              <div className="h-[3px] w-[18px] bg-white" />
            </div>
          </Tile>
        </DockIcon>
        <DockIcon dot>
          <svg width="70" height="70" viewBox="0 0 70 70" fill="none" className="shrink-0">
            <circle cx="35" cy="35" r="35" fill="#1ed760" />
            <path d="M14 24c16-5 30-3 43 4M17 36c13-4 26-2 36 4M20 47c10-3 20-2 29 3" stroke="#111" strokeWidth="6" strokeLinecap="round" />
          </svg>
        </DockIcon>
        <DockIcon>
          <svg width="67" height="68" viewBox="0 0 67 68" fill="none">
            <defs>
              <linearGradient id="prefs" x1="0" y1="0" x2="0" y2="1">
                <stop offset="0" stopColor="#d6dbe0" />
                <stop offset="1" stopColor="#85888c" />
              </linearGradient>
            </defs>
            <rect width="67" height="68" rx="15" fill="url(#prefs)" />
            <circle cx="33" cy="34" r="28" fill="#4b4e52" />
            <circle cx="33" cy="34" r="27" stroke="#a0a3a7" strokeWidth="3" strokeDasharray="2 2" />
            <circle cx="33" cy="34" r="20" fill="#8f9296" />
            <circle cx="33" cy="34" r="16" fill="#55585c" />
            <path d="M33 34V18M33 34L19 42M33 34l14 8" stroke="#a5a8ac" strokeWidth="2.500" />
          </svg>
        </DockIcon>
        <DockIcon><Tile className="bg-[#5b6ee9]"><FaDiscord className="h-[46px] w-[46px] text-white" /></Tile></DockIcon>
        <DockIcon>
          <Tile className="bg-[linear-gradient(#5ee36d,#25c23d)]"><FaWhatsapp className="h-[56px] w-[56px] text-white" /></Tile>
          <div className="absolute right-[-10px] top-[-8px] flex h-[32px] w-[32px] items-center justify-center rounded-full bg-[#e8352c] text-[20px] text-[#ffd9d6]">4</div>
        </DockIcon>
        <DockIcon>
          <div className="flex h-[76px] w-[76px] shrink-0 items-center justify-center rounded-full bg-white">
            <svg width="46" height="46" viewBox="0 0 46 46" fill="none">
              <defs>
                <linearGradient id="ig" x1="0" y1="1" x2="1" y2="0">
                  <stop offset="0" stopColor="#f5a33b" />
                  <stop offset="0.5" stopColor="#d62f6e" />
                  <stop offset="1" stopColor="#8a3ab9" />
                </linearGradient>
              </defs>
              <rect x="2" y="2" width="42" height="42" rx="11" stroke="url(#ig)" strokeWidth="4" />
              <circle cx="23" cy="23" r="10" stroke="url(#ig)" strokeWidth="4" />
              <circle cx="34" cy="12" r="2.500" fill="#b13a9a" />
            </svg>
          </div>
        </DockIcon>
        <DockIcon dot><Tile><MessengerMark /></Tile></DockIcon>
        <DockIcon dot><Tile className="bg-[#f2f4f7]"><SiOpenai className="h-[50px] w-[50px] text-[#222222]" /></Tile></DockIcon>
        <DockIcon dot><PreviewMark /></DockIcon>
        <DockIcon dot>
          <Tile>
            <svg width="46" height="46" viewBox="0 0 46 46">
              <circle cx="26" cy="23" r="21" fill="#ed6c47" />
              <path d="M26 2a21 21 0 0 1 21 21H26z" fill="#ff8f6b" />
              <rect x="2" y="12" width="24" height="24" rx="2" fill="#c43e1c" />
              <text x="14" y="30" textAnchor="middle" fontSize="18" fontWeight="700" fill="#fff" fontFamily="Inter">P</text>
            </svg>
          </Tile>
        </DockIcon>
        <DockIcon dot>
          <Tile>
            <svg width="46" height="56" viewBox="0 0 46 56" fill="none">
              <path d="M2 12h20M2 24h20" stroke="#53bdc9" strokeWidth="4" />
              <path d="M4 38c4 12 16 18 20 6" stroke="#53bdc9" strokeWidth="3" />
              <path d="M34 2c5-2 8 1 7 6l-7 30-5 1z" fill="#111" />
            </svg>
          </Tile>
        </DockIcon>
        <DockIcon dot>
          <Tile><Office a="#2b7cd3" b="#41a5ee" c="#185abd" d="#103f91" badge="#185abd" letter="W" /></Tile>
        </DockIcon>
        <DockIcon dot>
          <Tile><Office a="#21a366" b="#33c481" c="#107c41" d="#185c37" badge="#107c41" letter="X" /></Tile>
        </DockIcon>

        {/* recent windows part of the dock */}
        <div className="ml-[10px] h-[78px] w-[2px] shrink-0 bg-[#39425e]" />
        <div className="-ml-[3px] flex gap-[9px]">
          <Thumb boxClass="h-[48px]" badge={<VsMark size={20} />}><CodeLines /></Thumb>
          <Thumb boxClass="h-[48px] bg-[#2b2b2b]" badge={<Chrome size={22} />} />
          <Thumb boxClass="h-[62px] bg-[#2b2b2b]" badge={<Chrome size={22} />}>
            <div className="flex h-full items-center justify-center gap-[5px]">
              <div className="h-[5px] w-[5px] rounded-full bg-[#cccccc]" />
              <div className="h-[5px] w-[5px] rounded-full bg-[#cccccc]" />
              <div className="h-[5px] w-[5px] rounded-full bg-[#e8503a]" />
              <div className="h-[5px] w-[5px] rounded-full bg-[#aaaaaa]" />
            </div>
          </Thumb>
          <Thumb boxClass="h-[48px] bg-[#2b2b2b]" badge={<Chrome size={22} />} />
          <Thumb boxClass="h-[48px]" badge={<VsMark size={20} />}><CodeLines red /></Thumb>
          <Thumb boxClass="h-[62px] bg-black" badge={<Chrome size={22} />} />
          <Thumb boxClass="flex h-[46px] justify-center bg-[#2c2c2c] pl-[6px]" badge={<PreviewMark width={24} height={26} />}>
            <div className="flex h-full w-[38px] flex-col gap-[3px] bg-[#efefef] px-[4px] pt-[4px]">
              <div className="h-[1px] w-full bg-[#888888]" />
              <div className="h-[1px] w-[20px] bg-[#888888]" />
              <div className="h-[1px] w-full bg-[#888888]" />
              <div className="h-[1px] w-[24px] bg-[#888888]" />
              <div className="h-[1px] w-full bg-[#888888]" />
            </div>
          </Thumb>
          <div className="ml-[4px]">
            <Thumb wide="w-[72px]" boxClass="flex h-[78px] bg-[#1f3530]" badge={<MessengerMark size={20} />}>
              <div className="flex w-[36px] flex-col gap-[4px] bg-[#242a29] pl-[3px] pt-[14px]">
                <div className="h-[8px] w-[28px] bg-[#8f9a97]" />
                <div className="h-[3px] w-[24px] bg-[#6a7572]" />
                <div className="h-[3px] w-[28px] bg-[#6a7572]" />
                <div className="h-[3px] w-[24px] bg-[#6a7572]" />
                <div className="h-[3px] w-[28px] bg-[#6a7572]" />
                <div className="h-[3px] w-[24px] bg-[#6a7572]" />
                <div className="h-[3px] w-[28px] bg-[#6a7572]" />
              </div>
              <div className="ml-[3px] mt-[20px] flex flex-col gap-[6px]">
                <div className="h-[16px] w-[24px] bg-[#7a5a44]" />
                <div className="h-[14px] w-[22px] bg-[#3f5f6a]" />
              </div>
            </Thumb>
          </div>
          <div className="ml-[7px]">
            <Thumb wide="w-[73px]" boxClass="h-[78px] bg-[#141414]" badge={<Chrome size={22} />}>
              <div className="mt-[6px] h-[5px] w-full bg-[#3a3a3a]" />
              <div className="mt-[3px] h-[6px] w-full bg-[#dedede]" />
              <div className="grid h-[26px] grid-cols-3">
                <div className="bg-[#f1c232]" />
                <div className="bg-[#4a90e2]" />
                <div className="bg-[#9fc94f]" />
              </div>
              <div className="ml-[4px] mt-[6px] flex flex-col gap-[4px]">
                <div className="h-[2px] w-[40px] bg-[#9a9a9a]" />
                <div className="h-[2px] w-[28px] bg-[#777777]" />
                <div className="h-[2px] w-[36px] bg-[#777777]" />
              </div>
            </Thumb>
          </div>
          <svg width="60" height="78" viewBox="0 0 60 78" className="ml-[13px] shrink-0">
            <defs>
              <linearGradient id="trash" x1="0" y1="0" x2="1" y2="0">
                <stop offset="0" stopColor="#55585d" />
                <stop offset="0.5" stopColor="#989ba0" />
                <stop offset="1" stopColor="#5f6267" />
              </linearGradient>
            </defs>
            <path d="M1 12h58l-6 58c-1 5-4 8-9 8H16c-5 0-8-3-9-8z" fill="url(#trash)" />
            <ellipse cx="30" cy="11" rx="29" ry="9" fill="#7d8084" />
            <path d="M7 11l7-8 8 4 7-7 9 5 8-3 7 9-10 5-11-3-10 3z" fill="#e4e6e8" />
            <path d="M20 6l7 6-9 3zM40 6l5 6-11 2z" fill="#4c6b62" />
          </svg>
        </div>
      </div>
    </div>
  );
}
